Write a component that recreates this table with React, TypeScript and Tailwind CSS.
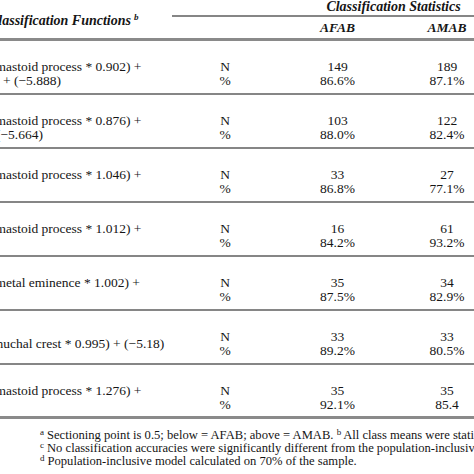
import React from "react";

type FnLine = { text: string; cls: string };
type Row = {
  lines: FnLine[];
  centered?: boolean;
  afab: [string, string];
  amab: [string, string];
};

const rows: Row[] = [
  {
    lines: [
      { text: "(mastoid process * 0.902) +", cls: "-ml-[9px]" },
      { text: "+ (−5.888)", cls: "ml-[3px]" },
    ],
    afab: ["149", "86.6%"],
    amab: ["189", "87.1%"],
  },
  {
    lines: [
      { text: "(mastoid process * 0.876) +", cls: "-ml-[9px]" },
      { text: "(−5.664)", cls: "-ml-[4px]" },
    ],
    afab: ["103", "88.0%"],
    amab: ["122", "82.4%"],
  },
  {
    lines: [{ text: "(mastoid process * 1.046) +", cls: "-ml-[9px]" }],
    afab: ["33", "86.8%"],
    amab: ["27", "77.1%"],
  },
  {
    lines: [{ text: "(mastoid process * 1.012) +", cls: "-ml-[9px]" }],
    afab: ["16", "84.2%"],
    amab: ["61", "93.2%"],
  },
  {
    lines: [{ text: "(metal eminence * 1.002) +", cls: "-ml-[9px]" }],
    afab: ["35", "87.5%"],
    amab: ["34", "82.9%"],
  },
  {
    lines: [{ text: "(nuchal crest * 0.995) + (−5.18)", cls: "-ml-[8px]" }],
    centered: true,
    afab: ["33", "89.2%"],
    amab: ["33", "80.5%"],
  },
  {
    lines: [{ text: "(mastoid process * 1.276) +", cls: "-ml-[9px]" }],
    afab: ["35", "92.1%"],
    amab: ["35", "85.4"],
  },
];

function TableRow({ row, last }: { row: Row; last: boolean }) {
  return (
    <div
      className={
        "grid grid-cols-[172px_106px_119px_100px] pt-[19px] " +
        (last ? "pb-[4px] border-b-[3px] border-[#8a8a8a]" : "pb-[5px] border-b-2 border-[#868686]")
      }
    >
      <div className={"flex flex-col overflow-hidden " + (row.centered ? "justify-center" : "")}>
        {row.lines.map((l, i) => (
          <div key={i} className={"h-[14px] leading-[14px] whitespace-nowrap " + l.cls}>
            {l.text}
          </div>
        ))}
      </div>
      <div className="flex flex-col items-center">
        <div className="h-[14px] leading-[14px]">N</div>
        <div className="h-[14px] leading-[14px]">%</div>
      </div>
      <div className="flex flex-col items-center">
        <div className="h-[14px] leading-[14px]">{row.afab[0]}</div>
        <div className="h-[14px] leading-[14px]">{row.afab[1]}</div>
      </div>
      <div className="flex flex-col items-center">
        <div className="h-[14px] leading-[14px]">{row.amab[0]}</div>
        <div className="h-[14px] leading-[14px]">{row.amab[1]}</div>
      </div>
    </div>
  );
}

export default function App() {
  return (
    <div className="w-[474px] h-[474px] overflow-hidden bg-white text-[#151515] font-['Liberation_Serif',serif] text-[13.5px]">
      <div className="w-[497px]">
        {/* header */}
        <div className="grid grid-cols-[172px_325px] border-b-[3px] border-[#8a8a8a] h-[41px]">
          <div className="flex items-center overflow-hidden pt-[2px]">
            <span className="-ml-[11px] whitespace-nowrap font-bold italic text-[14px]">
              Classification Functions<sup className="ml-[3px] text-[9px]">b</sup>
            </span>
          </div>
          <div className="flex flex-col">
            <div className="h-[17px] border-b-2 border-[#868686] pl-[106px]">
              <div className="text-center font-bold italic text-[14px] leading-[13px] pl-[12px]">
                Classification Statistics
              </div>
            </div>
            <div className="grid grid-cols-[106px_119px_100px] pt-[4px] font-bold italic">
              <div />
              <div className="text-center leading-[14px]">AFAB</div>
              <div className="text-center leading-[14px]">AMAB</div>
            </div>
          </div>
        </div>

        {rows.map((r, i) => (
          <TableRow key={i} row={r} last={i === rows.length - 1} />
        ))}

        {/* footnotes */}
        <div className="pl-[40px] pt-[10px] text-[12.6px] whitespace-nowrap flex flex-col gap-[0px]">
          <div className="h-[13px] leading-[13px]">
            <sup className="text-[9px] leading-none mr-[3px]">a</sup>Sectioning point is 0.5; below = AFAB; above = AMAB.{" "}
            <sup className="text-[9px] leading-none mr-[2px]">b</sup>All class means were statistically significant.
          </div>
          <div className="h-[13px] leading-[13px]">
            <sup className="text-[9px] leading-none mr-[3px]">c</sup>No classification accuracies were significantly different from the population-inclusive model.
          </div>
          <div className="h-[13px] leading-[13px]">
            <sup className="text-[9px] leading-none mr-[3px]">d</sup>Population-inclusive model calculated on 70% of the sample.
          </div>
        </div>
      </div>
    </div>
  );
}
